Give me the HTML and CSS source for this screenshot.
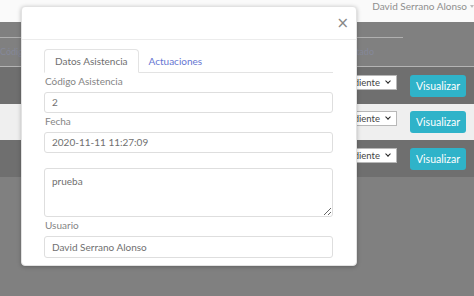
FILE: index.html
```html
<!DOCTYPE html>
<html lang="es">
<head>
<meta charset="utf-8">
<link rel="stylesheet" href="styles.css">
</head>
<body>
<div class="navbar">
  <span class="user">David Serrano Alonso</span><span class="caret"></span>
</div>
<div class="page">
  <div class="thead">
    <div class="thead-line"></div>
    <div class="thead-text"><span>Código</span><span>Estado</span></div>
  </div>
  <div class="row dark">
    <span class="select">Pendiente<span class="chev"></span></span>
    <button class="btn">Visualizar</button>
  </div>
  <div class="row light">
    <span class="select">Pendiente<span class="chev"></span></span>
    <button class="btn">Visualizar</button>
  </div>
  <div class="row dark">
    <span class="select">Pendiente<span class="chev"></span></span>
    <button class="btn">Visualizar</button>
  </div>
</div>

<div class="modal">
  <div class="modal-header">
    <span class="close">&times;</span>
  </div>
  <div class="modal-body">
    <div class="tabs">
      <span class="tab active">Datos Asistencia</span>
      <span class="tab">Actuaciones</span>
    </div>
    <div class="group">
      <label>Código Asistencia</label>
      <div class="input">2</div>
    </div>
    <div class="group">
      <label>Fecha</label>
      <div class="input">2020-11-11 11:27:09</div>
    </div>
    <div class="group">
      <label class="empty"></label>
      <textarea class="textarea">prueba</textarea>
    </div>
    <div class="group">
      <label>Usuario</label>
      <div class="input tall">David Serrano Alonso</div>
    </div>
  </div>
</div>
</body>
</html>
```

FILE: styles.css
```css
* { box-sizing: border-box; }
html, body { margin: 0; padding: 0; }
body {
  width: 474px;
  height: 296px;
  overflow: hidden;
  font-family: "Lato", "Noto Sans", sans-serif;
  font-size: 10px;
  background: #808080;
  position: relative;
}
.navbar {
  height: 22px;
  background: #fafafa;
  display: flex;
  justify-content: flex-end;
  align-items: flex-start;
  padding-top: 0;
  color: #8f8f8f;
}
.navbar .user { font-size: 10px; line-height: 12px; }
.caret {
  width: 0; height: 0;
  margin: 5px 0 0 3px;
  border-left: 2px solid transparent;
  border-right: 2px solid transparent;
  border-top: 3px solid #bbb;
}
.page { background: #808080; }
.thead {
  height: 45px;
  position: relative;
  border-bottom: 1px solid #b4b4b4;
}
.thead-line {
  position: absolute;
  left: 0; top: 15px;
  width: 403px;
  height: 1px;
  background: #b0b0b0;
}
.thead-text {
  display: flex;
  justify-content: space-between;
  padding: 24px 100px 0 0;
  color: #858899;
  font-size: 9px;
}
.row {
  height: 37px;
  display: flex;
  justify-content: flex-end;
  align-items: center;
  padding-right: 8px;
  gap: 13px;
}
.row.dark { background: #6f6f6f; }
.row.light { background: #efefef; height: 36px; }
.select {
  height: 15px;
  background: #fff;
  border: 1px solid #b8b8b8;
  color: #444;
  font-size: 9.5px;
  line-height: 13px;
  padding: 0 6px 0 3px;
  display: flex;
  align-items: center;
  margin-top: -7px;
}
.chev {
  width: 4px; height: 4px;
  margin-left: 6px;
  border-right: 1.5px solid #222;
  border-bottom: 1.5px solid #222;
  transform: rotate(45deg);
  margin-top: -3px;
}
.btn {
  width: 56px;
  height: 22px;
  background: #2fb3c9;
  border: none;
  border-radius: 3px;
  color: #fff;
  font-family: inherit;
  font-size: 10.5px;
  padding: 0;
}
.modal {
  position: absolute;
  left: 21px;
  top: 6px;
  width: 336px;
  height: 260px;
  background: #fff;
  border: 1px solid #e2e2e2;
  border-radius: 4px;
  box-shadow: 0 1px 4px rgba(0,0,0,.25);
}
.modal-header {
  height: 33px;
  border-bottom: 1px solid #ececec;
  display: flex;
  justify-content: flex-end;
  align-items: center;
  padding-right: 7px;
}
.close {
  font-size: 15px;
  color: #888;
  line-height: 16px;
  font-family: "DejaVu Sans", sans-serif;
}
.modal-body {
  padding: 9px 23px 0 22px;
}
.tabs {
  display: flex;
  height: 24px;
  border-bottom: 1px solid #e3e3e3;
}
.tab {
  display: flex;
  align-items: center;
  padding: 0 10px;
  height: 24px;
  color: #6676d2;
  font-size: 10px;
}
.tab.active {
  color: #6f6f6f;
  border: 1px solid #e3e3e3;
  border-bottom-color: #fff;
  border-radius: 4px 4px 0 0;
}
.group { margin-top: 2px; }
.group label {
  display: block;
  height: 12px;
  line-height: 12px;
  color: #858585;
  font-size: 10px;
  margin-bottom: 5px;
  padding-left: 1px;
}
.group label.empty { height: 8px; }
.input {
  height: 21px;
  border: 1px solid #dedede;
  border-radius: 3px;
  color: #707070;
  font-size: 10px;
  line-height: 19px;
  padding-left: 7px;
}
.input.tall { height: 22px; line-height: 20px; }
.textarea {
  display: block;
  width: 100%;
  height: 49px;
  border: 1px solid #dedede;
  border-radius: 3px;
  color: #707070;
  font-family: inherit;
  font-size: 10px;
  line-height: 12px;
  padding: 6px 7px;
  margin: 0;
  resize: vertical;
}
```
